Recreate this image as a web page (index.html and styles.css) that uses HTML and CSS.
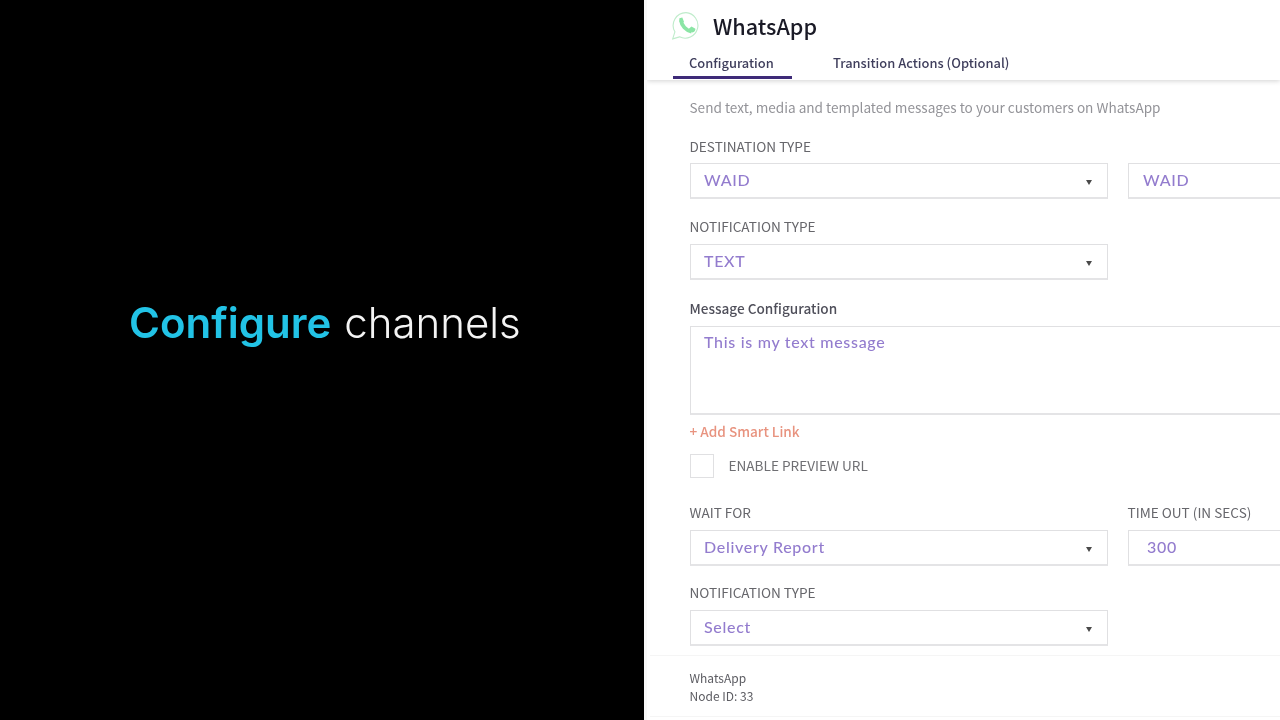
FILE: index.html
```html
<!DOCTYPE html>
<html lang="en">
<head>
<meta charset="utf-8">
<title>Configure channels</title>
<link rel="stylesheet" href="styles.css">
</head>
<body>
<div class="stage">
  <section class="intro">
    <h1 class="intro-title"><span class="accent">Configure</span> channels</h1>
  </section>
  <section class="panel">
    <header class="panel-head">
      <div class="title-row">
        <svg class="wa-icon" viewBox="2 2 25 25" aria-hidden="true">
          <path class="wa-ring" d="M14.500 2.600a11.400 11.400 0 0 0-9.900 17.100L2.600 26l6.100-1.800A11.400 11.400 0 1 0 14.500 2.600z"/>
          <path class="wa-phone-line" d="M10 9.500C10.500 14 14.500 18.500 19.500 19.500"/>
          <path class="wa-phone" d="M8.600 7.500l2.600-.6 1.500 3.800-2.400 2.400C9 12 8.200 9.500 8.600 7.500zM17 17l2.400-2 3.500 2c.1 1.600-1 3-2.600 3.200-1.200-.3-2.800-1.300-3.300-3.200z"/>
        </svg>
        <h2 class="panel-title">WhatsApp</h2>
      </div>
      <nav class="tabs">
        <a class="tab tab-active">Configuration</a>
        <a class="tab">Transition Actions (Optional)</a>
      </nav>
    </header>
    <div class="panel-body">
      <p class="lede">Send text, media and templated messages to your customers on WhatsApp</p>

      <div class="row row-dest">
        <div class="field">
          <label class="label">DESTINATION TYPE</label>
          <div class="control select"><span class="value">WAID</span><i class="caret"></i></div>
        </div>
        <div class="field side">
          <div class="control"><span class="value">WAID</span></div>
        </div>
      </div>

      <div class="field field-notif">
        <label class="label">NOTIFICATION TYPE</label>
        <div class="control select"><span class="value">TEXT</span><i class="caret"></i></div>
      </div>

      <div class="field field-msg">
        <label class="label label-strong">Message Configuration</label>
        <div class="textarea"><span class="value">This is my text message</span></div>
      </div>

      <a class="smart-link">+ Add Smart Link</a>

      <div class="check-row">
        <span class="checkbox"></span>
        <span class="check-label">ENABLE PREVIEW URL</span>
      </div>

      <div class="row row-wait">
        <div class="field">
          <label class="label">WAIT FOR</label>
          <div class="control select"><span class="value">Delivery Report</span><i class="caret"></i></div>
        </div>
        <div class="field side">
          <label class="label">TIME OUT (IN SECS)</label>
          <div class="control control-num"><span class="value">300</span></div>
        </div>
      </div>

      <div class="field field-notif2">
        <label class="label">NOTIFICATION TYPE</label>
        <div class="control select"><span class="value">Select</span><i class="caret"></i></div>
      </div>
    </div>
    <footer class="panel-foot">
      <div>WhatsApp</div>
      <div>Node ID: 33</div>
    </footer>
  </section>
</div>
</body>
</html>
```
FILE: styles.css
```css
* { box-sizing: border-box; }
html, body { margin: 0; padding: 0; background: #000; }
.stage { display: flex; width: 1280px; height: 720px; overflow: hidden; }

.intro {
  width: 644px;
  flex: none;
  background: #000;
  display: flex;
  align-items: center;
  padding: 0 0 73px 129px;
  height: 720px;
  filter: blur(.4px);
}
.intro-title {
  margin: 0;
  font: 300 42px/1.2 Inter, "Liberation Sans", sans-serif;
  word-spacing: 1px;
  color: #f4f4f4;
  white-space: nowrap;
}
.accent { color: #22c3e6; font-weight: 600; }

.panel {
  flex: none;
  width: 636px;
  height: 720px;
  background: #fff;
  border-left: 3px solid #f8f8f8;
  display: flex;
  flex-direction: column;
  font-family: "Noto Sans CJK JP", "Noto Sans", sans-serif;
  overflow: hidden;
  filter: blur(.5px);
}
.panel-head {
  height: 80px;
  flex: none;
  padding-left: 25px;
  box-shadow: 0 1px 5px rgba(0, 0, 0, .18);
  position: relative;
}
.title-row { display: flex; align-items: center; height: 50px; padding-top: 1px; }
.wa-icon { width: 28px; height: 28px; flex: none; margin-right: 13px; }
.wa-ring { fill: #fff; stroke: #bfeccb; stroke-width: 1; }
.wa-phone { fill: #8be5a5; }
.wa-phone-line { fill: none; stroke: #8be5a5; stroke-width: 3.400; }
.panel-title { margin: 0; font-size: 21.6px; font-weight: 500; color: #1a1a26; line-height: 1; }

.tabs { display: flex; height: 30px; gap: 41px; }
.tab {
  font-size: 12.9px;
  font-weight: 500;
  color: #3f3e5c;
  line-height: 28px;
  height: 30px;
  margin-top: -1px;
}
.tab-active {
  width: 119px;
  margin-left: 1px;
  padding-left: 16px;
  border-bottom: 3px solid #3e2a78;
}

.panel-body { flex: 1; padding: 0 0 0 42.500px; min-height: 0; }
.lede { margin: 16px 0 0; font-size: 13.6px; line-height: 22px; color: #939398; white-space: nowrap; height: 22px; }

.row { display: flex; gap: 20px; }
.field { width: 418px; flex: none; }
.side { width: 200px; display: flex; flex-direction: column; justify-content: flex-end; }
.row-dest { margin-top: 18px; }
.field-notif { margin-top: 18px; }
.field-msg { margin-top: 19px; }
.row-wait { margin-top: 25px; }
.field-notif2 { margin-top: 17px; }

.label {
  display: block;
  font-size: 13.6px;
  line-height: 18px;
  color: #66666b;
  margin-bottom: 9px;
}
.row-dest .label { padding-top: 1px; height: 20px; margin-bottom: 7px; }
.label-strong { color: #4f4f5a; font-weight: 500; }

.control {
  height: 36px;
  border: 1px solid #e0e0e2;
  border-bottom: 2px solid #e4e4e6;
  display: flex;
  align-items: center;
  padding: 0 14px 0 13.500px;
  background: #fff;
}
.side .control { padding-left: 14.500px; }
.control-num.control { padding-left: 18.500px; }
.value {
  font-family: Lato, sans-serif;
  font-size: 16px;
  font-weight: 500;
  letter-spacing: .7px;
  color: #937cce;
  margin-top: -3px;
}
.select { justify-content: space-between; }
.caret {
  width: 0;
  height: 0;
  border-left: 3.500px solid transparent;
  border-right: 3.500px solid transparent;
  border-top: 5px solid #4a4a4a;
  margin: 4px .5px 0 0;
}
.textarea {
  width: 600px;
  height: 89px;
  border: 1px solid #e0e0e2;
  border-bottom: 2px solid #e4e4e6;
  padding: 2px 13.500px;
  display: block;
}
.smart-link {
  display: block;
  margin: 6px 0 0;
  font-size: 13.6px;
  font-weight: 500;
  line-height: 20px;
  color: #e8937f;
}
.check-row { display: flex; align-items: center; margin-top: 13px; height: 24px; }
.checkbox { width: 24px; height: 24px; border: 1px solid #e0e0e2; margin-right: 15px; flex: none; }
.check-label { font-size: 13.6px; color: #6f6f73; line-height: 20px; margin-top: -2px; }

.panel-foot {
  margin: 0 0 3px 3px;
  height: 62px;
  flex: none;
  padding: 13px 0 0 39.500px;
  font-size: 12px;
  line-height: 18px;
  color: #5c5c62;
  border-top: 1px solid #f5f5f5;
  border-bottom: 1px solid #f5f5f5;
}
```
